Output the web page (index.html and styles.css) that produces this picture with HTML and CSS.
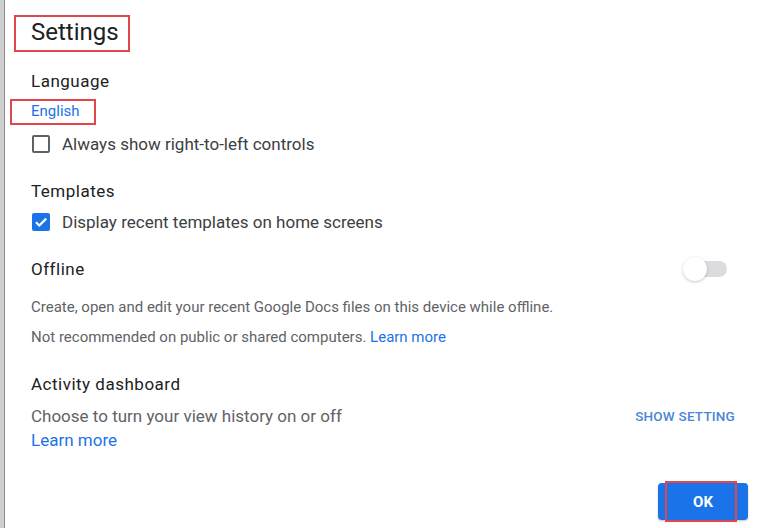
FILE: index.html
```html
<!DOCTYPE html>
<html lang="en">
<head>
<meta charset="utf-8">
<title>Settings</title>
<link rel="stylesheet" href="styles.css">
</head>
<body>
<div class="page">
  <div class="strip"></div>
  <main class="dialog">
    <h1 class="title"><span class="marked marked-title">Settings</span></h1>

    <h2 class="section first">Language</h2>
    <div class="lang"><span class="marked marked-lang">English</span></div>
    <label class="check-row">
      <span class="box"></span>
      <span class="check-label">Always show right-to-left controls</span>
    </label>

    <h2 class="section">Templates</h2>
    <label class="check-row tight">
      <span class="box checked">
        <svg viewBox="0 0 18 18" width="18" height="18"><path d="M4 9.2l3.3 3.3L14.2 5.6" fill="none" stroke="#fff" stroke-width="2.2"/></svg>
      </span>
      <span class="check-label">Display recent templates on home screens</span>
    </label>

    <div class="section row">
      <span>Offline</span>
      <span class="toggle"><span class="track"></span><span class="knob"></span></span>
    </div>
    <p class="desc first-desc">Create, open and edit your recent Google Docs files on this device while offline.</p>
    <p class="desc">Not recommended on public or shared computers. <a class="link">Learn more</a></p>

    <h2 class="section activity">Activity dashboard</h2>
    <div class="activity-row">
      <span class="desc-lg">Choose to turn your view history on or off</span>
      <a class="text-btn">SHOW SETTING</a>
    </div>
    <a class="link link-lg">Learn more</a>

    <div class="footer">
      <button class="ok"><span class="marked marked-ok">OK</span></button>
    </div>
  </main>
</div>
</body>
</html>
```

FILE: styles.css
```css
html, body {
  margin: 0;
  padding: 0;
  background: #fff;
}
body {
  font-family: Roboto, "Liberation Sans", Arial, sans-serif;
  color: #202124;
}
.page {
  display: flex;
  width: 768px;
  height: 528px;
  overflow: hidden;
}
.strip {
  width: 4px;
  flex: none;
  background: #cfcfcf;
  border-right: 1px solid #8d8d8d;
}
.dialog {
  flex: 1;
  padding: 0 33px 0 26px;
  display: flex;
  flex-direction: column;
}
.title {
  margin: 0;
  padding-top: 16px;
  font-size: 24px;
  line-height: 32px;
  font-weight: 400;
  color: #202124;
}
.marked {
  position: relative;
}
.marked::after {
  content: "";
  position: absolute;
  border: 2px solid #e0474c;
  box-sizing: border-box;
}
.marked-title::after {
  left: -17px;
  right: -11px;
  top: -3px;
  bottom: -6px;
}
.marked-lang::after {
  left: -21px;
  right: -16px;
  top: -3px;
  bottom: -5px;
}
.section {
  margin: 23px 0 0;
  font-size: 17px;
  letter-spacing: 0.5px;
  line-height: 24px;
  font-weight: 400;
  color: #202124;
}
.section.first {
  margin-top: 21px;
}
.section.activity {
  margin-top: 25px;
}
.lang {
  margin-top: 7px;
  font-size: 15px;
  line-height: 22px;
  color: #1a73e8;
}
.check-row {
  display: flex;
  align-items: center;
  gap: 12px;
  height: 24px;
  margin-top: 10px;
  font-size: 17px;
  color: #3c4043;
}
.check-row.tight {
  margin-top: 7px;
}
.box {
  width: 18px;
  height: 18px;
  box-sizing: border-box;
  border: 2px solid #5f6368;
  border-radius: 2px;
  margin-left: 1px;
  display: flex;
  align-items: center;
  justify-content: center;
}
.box.checked {
  background: #1a73e8;
  border-color: #1a73e8;
}
.box svg {
  display: block;
  flex: none;
}
.row {
  display: flex;
  align-items: center;
  justify-content: space-between;
  height: 24px;
}
.toggle {
  position: relative;
  width: 44px;
  height: 24px;
  margin-right: 8px;
}
.track {
  position: absolute;
  left: 6px;
  right: 0;
  top: 4px;
  height: 16px;
  border-radius: 8px;
  background: #dadce0;
}
.knob {
  position: absolute;
  left: 0;
  top: 0;
  width: 24px;
  height: 24px;
  border-radius: 50%;
  background: #fff;
  box-shadow: 0 1px 3px rgba(60, 64, 67, 0.3);
}
.desc {
  margin: 10px 0 0;
  font-size: 15px;
  line-height: 20px;
  color: #5f6368;
}
.desc.first-desc {
  margin-top: 16px;
}
.link {
  color: #1a73e8;
  text-decoration: none;
}
.activity-row {
  display: flex;
  align-items: center;
  justify-content: space-between;
  margin-top: 8px;
  height: 24px;
}
.desc-lg {
  font-size: 17px;
  line-height: 24px;
  color: #5f6368;
}
.text-btn {
  font-size: 13.5px;
  font-weight: 500;
  letter-spacing: 0.2px;
  color: #4a86d8;
}
.link-lg {
  margin-top: 0;
  font-size: 17px;
  line-height: 24px;
  align-self: flex-start;
}
.footer {
  display: flex;
  justify-content: flex-end;
  margin-top: 31px;
  margin-right: -13px;
}
.ok {
  width: 90px;
  height: 37px;
  border: none;
  border-radius: 4px;
  background: #1a73e8;
  color: #fff;
  font-family: inherit;
  font-size: 15px;
  font-weight: 700;
  padding: 0;
  box-shadow: 0 1px 2px rgba(60, 64, 67, 0.3);
}
.marked-ok::after {
  left: -28px;
  right: -24px;
  top: -12px;
  bottom: -11px;
}
```
